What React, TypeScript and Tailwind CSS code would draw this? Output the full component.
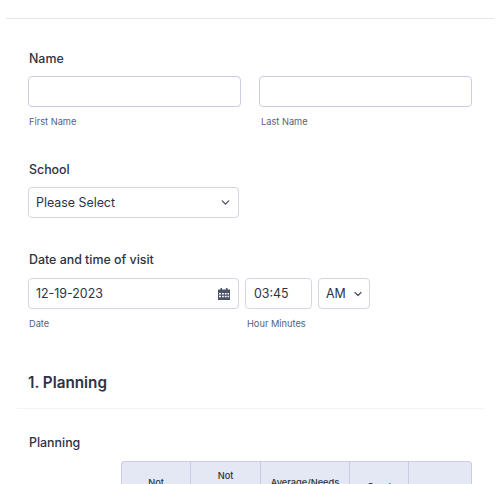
import { ChevronDown } from "lucide-react";

const inputClass =
  "h-[31px] rounded-[4px] border border-[#c9cde3] bg-white";
const boxClass =
  "h-[31px] rounded-[4px] border border-[#d3d6e4] bg-white flex items-center text-[12.4px] text-[#2c3345]";
const labelClass = "text-[12.4px] leading-[20px] font-[450] text-[#2c3345] pl-[1px]";
const subLabelClass = "text-[9.25px] leading-[14px] text-[#57607a]";

const columns = [
  { label: "Not Applicable", width: "w-[68px]", extra: "px-[12px]" },
  { label: "Not Applicable Here", width: "w-[70px]", extra: "px-[12px]" },
  { label: "Average/Needs Improvement", width: "w-[89px]", extra: "px-[4px]" },
  { label: "Good", width: "w-[59px]", extra: "pb-[6px]" },
  { label: "Excellent", width: "w-[64px]", extra: "px-[4px]" },
];

const CalendarIcon = () => (
  <svg width="12" height="12" viewBox="0 0 12 12" fill="#4b5368">
    <rect x="2.5" y="0" width="1.5" height="2.5" />
    <rect x="8" y="0" width="1.5" height="2.5" />
    <path d="M0 1.5h12V12H0z M1 5v1.5h2V5z M4 5v1.5h1.8V5z M6.8 5v1.5h1.8V5z M9.5 5v1.5H11V5z M1 7.7v1.5h2V7.7z M4 7.7v1.5h1.8V7.7z M6.8 7.7v1.5h1.8V7.7z M9.5 7.7v1.5H11V7.7z" fillRule="evenodd" />
  </svg>
);

export default function App() {
  return (
    <div className="h-[484px] w-[500px] overflow-hidden bg-white font-['Inter',sans-serif]">
      <div className="pt-[18px] px-[6px]">
        <div className="h-[1px] bg-[#e3e5f2]" />
      </div>

      <div className="pl-[28px] pr-[28px] pt-[30px]">
        <div className={labelClass}>Name</div>
        <div className="mt-[7px] flex gap-[18px]">
          <div className="w-[213px]">
            <div className={inputClass} />
            <div className={`${subLabelClass} mt-[8px] pl-[1px]`}>First Name</div>
          </div>
          <div className="w-[213px]">
            <div className={inputClass} />
            <div className={`${subLabelClass} mt-[8px] pl-[2px]`}>Last Name</div>
          </div>
        </div>

        <div className={`${labelClass} mt-[31px]`}>School</div>
        <div className={`${boxClass} mt-[7px] w-[211px] justify-between pl-[7px] pr-[6px]`}>
          <span className="pt-[2px]">Please Select</span>
          <ChevronDown size={13} strokeWidth={2.5} className="text-[#4b5368]" />
        </div>

        <div className={`${labelClass} mt-[32px]`}>Date and time of visit</div>
        <div className="mt-[8px] flex gap-[6px]">
          <div>
            <div className={`${boxClass} w-[211px] justify-between pl-[7px] pr-[8px]`}>
              <span className="pt-[2px]">12-19-2023</span>
              <CalendarIcon />
            </div>
            <div className={`${subLabelClass} mt-[8px] pl-[1px]`}>Date</div>
          </div>
          <div>
            <div className={`${boxClass} w-[67px] pl-[8px]`}>
              <span className="pt-[2px]">03:45</span>
            </div>
            <div className={`${subLabelClass} mt-[8px] pl-[2px] whitespace-nowrap`}>Hour Minutes</div>
          </div>
          <div className={`${boxClass} w-[52px] justify-between pl-[7px] pr-[5px]`}>
            <span className="pt-[2px]">AM</span>
            <ChevronDown size={12} strokeWidth={2.5} className="text-[#4b5368]" />
          </div>
        </div>
      </div>

      <div className="mx-[17px] mt-[41px] border-b border-[#f3f3f5] pb-[14px] pl-[11px]">
        <div className="text-[15.25px] leading-[22px] font-semibold text-[#2c3345]">1. Planning</div>
      </div>

      <div className="pl-[28px] pr-[28px] pt-[24px]">
        <div className={labelClass}>Planning</div>
        <div className="mt-[8px] ml-[93px] flex w-[351px] rounded-t-[4px] border border-b-0 border-[#c9cde3] bg-[#e4e8f4]">
          {columns.map((col, i) => (
            <div
              key={col.label}
              className={`${col.width} ${col.extra} flex h-[56px] shrink-0 items-center justify-center text-center text-[9.25px] leading-[14px] font-medium text-[#2c3345] ${i > 0 ? "border-l border-[#c9cde3]" : ""}`}
            >
              {col.label}
            </div>
          ))}
        </div>
      </div>
    </div>
  );
}
